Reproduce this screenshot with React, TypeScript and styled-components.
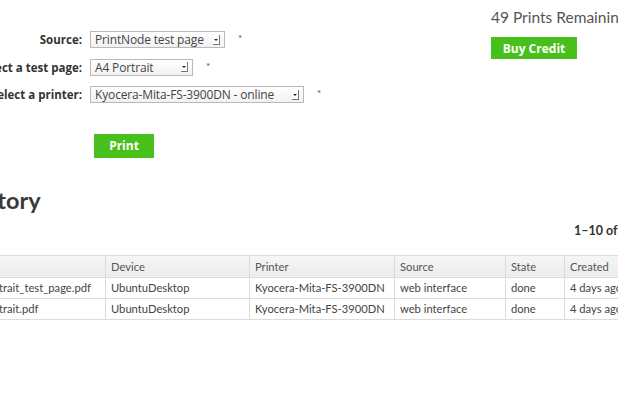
import React from 'react';
import styled, { createGlobalStyle } from 'styled-components';

const GlobalStyle = createGlobalStyle`
  html, body {
    margin: 0;
    padding: 0;
    background: #fff;
    overflow: hidden;
  }
  body {
    font-family: Lato, "Open Sans", sans-serif;
    color: #444;
  }
`;

interface Job {
  file: string;
  device: string;
  printer: string;
  source: string;
  state: string;
  created: string;
}

const JOBS: Job[] = [
  {
    file: 'A4_Portrait_test_page.pdf',
    device: 'UbuntuDesktop',
    printer: 'Kyocera-Mita-FS-3900DN',
    source: 'web interface',
    state: 'done',
    created: '4 days ago',
  },
  {
    file: 'A4_Portrait.pdf',
    device: 'UbuntuDesktop',
    printer: 'Kyocera-Mita-FS-3900DN',
    source: 'web interface',
    state: 'done',
    created: '4 days ago',
  },
];

// column widths incl. padding + border
const COLUMNS = [
  { title: 'File', width: 148 },
  { title: 'Device', width: 144 },
  { title: 'Printer', width: 145 },
  { title: 'Source', width: 111 },
  { title: 'State', width: 59 },
  { title: 'Created', width: 90 },
];

const App: React.FC = () => {
  return (
    <>
      <GlobalStyle />
      <Page>
        <Top>
          <Form>
            <FormRow>
              <Label>Source:</Label>
              <Select $width={135}>
                <SelectText>PrintNode test page</SelectText>
                <Arrow />
              </Select>
              <Star>*</Star>
            </FormRow>
            <FormRow>
              <Label>Select a test page:</Label>
              <Select $width={103}>
                <SelectText>A4 Portrait</SelectText>
                <Arrow />
              </Select>
              <Star>*</Star>
            </FormRow>
            <FormRow>
              <Label>Select a printer:</Label>
              <Select $width={214}>
                <SelectText>Kyocera-Mita-FS-3900DN - online</SelectText>
                <Arrow />
              </Select>
              <Star>*</Star>
            </FormRow>
            <PrintButton>Print</PrintButton>
          </Form>
          <Credit>
            <Remaining>49 Prints Remaining</Remaining>
            <CreditButton>Buy Credit</CreditButton>
          </Credit>
        </Top>

        <Heading>History</Heading>
        <Pager>1–10 of 2</Pager>

        <Table>
          <colgroup>
            {COLUMNS.map((c) => (
              <col key={c.title} style={{ width: c.width }} />
            ))}
          </colgroup>
          <thead>
            <tr>
              {COLUMNS.map((c) => (
                <Th key={c.title}>{c.title}</Th>
              ))}
            </tr>
          </thead>
          <tbody>
            {JOBS.map((job, idx) => (
              <tr key={idx}>
                <Td>{job.file}</Td>
                <Td>{job.device}</Td>
                <Td>{job.printer}</Td>
                <Td>{job.source}</Td>
                <Td>{job.state}</Td>
                <Td>{job.created}</Td>
              </tr>
            ))}
          </tbody>
        </Table>
      </Page>
    </>
  );
};

export default App;

// Styled Components
const Page = styled.div`
  margin-left: -60px;
  width: 780px;
`;

const Top = styled.div`
  display: flex;
`;

const Form = styled.div`
  width: 551px;
  padding-top: 31px;
  display: flex;
  flex-direction: column;
  gap: 10px;
`;

const FormRow = styled.div`
  display: flex;
  align-items: center;
  height: 17.5px;
`;

const Label = styled.label`
  width: 142px;
  margin-right: 8px;
  text-align: right;
  font-family: "Open Sans", Lato, sans-serif;
  font-weight: 700;
  font-size: 11.5px;
  color: #333;
  white-space: nowrap;
`;

const Select = styled.div<{ $width: number }>`
  width: ${(p) => p.$width}px;
  height: 17px;
  box-sizing: border-box;
  display: flex;
  align-items: center;
  justify-content: space-between;
  border: 1px solid #b9b9b9;
  background: linear-gradient(#ffffff, #f1f1f1);
  padding: 0 4px 0 4px;
`;

const SelectText = styled.span`
  font-family: "Open Sans", Lato, sans-serif;
  font-size: 12px;
  color: #444;
  white-space: nowrap;
  letter-spacing: -0.15px;
`;

const Arrow = styled.span`
  position: relative;
  flex-shrink: 0;
  width: 7px;
  height: 10px;
  background: #fff;
  border-right: 1px solid #777;
  border-bottom: 1px solid #777;
  box-sizing: border-box;
  &::after {
    content: '';
    position: absolute;
    left: 1px;
    top: 4px;
    border-left: 2px solid transparent;
    border-right: 2px solid transparent;
    border-top: 2px solid #222;
  }
`;

const Star = styled.span`
  margin-left: 13px;
  font-size: 10px;
  color: #555;
  align-self: flex-start;
  margin-top: 1px;
`;

const GreenButton = styled.button`
  background: #48c01c;
  color: #fff;
  border: none;
  font-family: "Open Sans", Lato, sans-serif;
  font-weight: 700;
  font-size: 12px;
  cursor: pointer;
  padding: 0;
`;

const PrintButton = styled(GreenButton)`
  width: 60px;
  height: 24px;
  margin-left: 154px;
  margin-top: 20px;
`;

const Credit = styled.div`
  padding-top: 7px;
  display: flex;
  flex-direction: column;
  align-items: flex-start;
`;

const Remaining = styled.div`
  font-size: 15.5px;
  color: #555;
  white-space: nowrap;
  line-height: 20px;
`;

const CreditButton = styled(GreenButton)`
  width: 86px;
  height: 22px;
  margin-top: 10px;
`;

const Heading = styled.h2`
  margin: 29px 0 0 23px;
  font-size: 23.5px;
  line-height: 27px;
  font-weight: 700;
  color: #3a3a3a;
`;

const Pager = styled.div`
  padding-left: 634px;
  margin-top: 10px;
  font-size: 12.5px;
  font-weight: 700;
  color: #333;
  line-height: 14px;
  white-space: nowrap;
`;

const Table = styled.table`
  margin: 17px 0 0 17px;
  border-collapse: collapse;
  table-layout: fixed;
  font-size: 11.2px;
  color: #444;
`;

const Th = styled.th`
  text-align: left;
  font-weight: 400;
  color: #555;
  height: 21px;
  padding: 0 5px;
  border: 1px solid #dcdcdc;
  background: linear-gradient(#f6f6f6, #ececec);
  white-space: nowrap;
  overflow: hidden;
`;

const Td = styled.td`
  height: 20px;
  padding: 0 5px;
  border: 1px solid #dcdcdc;
  white-space: nowrap;
  overflow: hidden;
`;
